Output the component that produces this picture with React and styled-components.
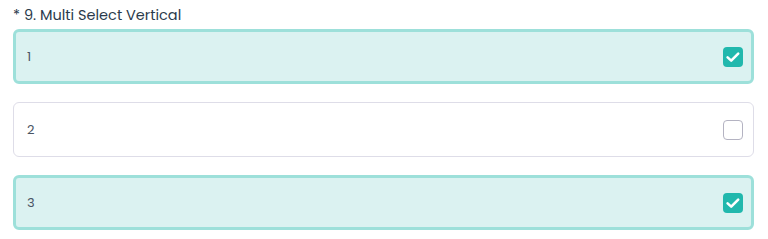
import React, { useState } from "react";
import styled, { createGlobalStyle } from "styled-components";

const Global = createGlobalStyle`
  html, body { margin: 0; padding: 0; background: #fff; }
  body { font-family: "Poppins", "Inter", "Noto Sans", sans-serif; }
`;

const Wrap = styled.div`
  padding: 5px 0 0 13px;
  width: 741px;
`;

const Title = styled.div`
  font-size: 14.5px;
  font-weight: 400;
  color: #2a3a4b;
  line-height: 20px;
  height: 24px;
`;

const List = styled.div`
  display: flex;
  flex-direction: column;
  gap: 18px;
`;

const Option = styled.label`
  box-sizing: border-box;
  height: 55px;
  display: flex;
  align-items: center;
  justify-content: space-between;
  border-radius: 6px;
  cursor: pointer;
  border: ${(p) => (p.$checked ? "3px solid #9de0da" : "1px solid #dedde8")};
  background: ${(p) => (p.$checked ? "#dbf2f1" : "#ffffff")};
  padding: ${(p) => (p.$checked ? "0 8px 0 11px" : "0 10px 0 13px")};
`;

const Label = styled.span`
  font-size: 13px;
  color: #4a5564;
`;

const Box = styled.span`
  width: 20px;
  height: 20px;
  box-sizing: border-box;
  border-radius: 4px;
  display: flex;
  align-items: center;
  justify-content: center;
  background: ${(p) => (p.$checked ? "#21b8ad" : "#fff")};
  border: ${(p) => (p.$checked ? "none" : "1.5px solid #b4b3c2")};
`;

const options = [
  { id: 1, checked: true },
  { id: 2, checked: false },
  { id: 3, checked: true },
];

export default function App() {
  const [state, setState] = useState(options);
  return (
    <>
      <Global />
      <Wrap>
        <Title>* 9. Multi Select Vertical</Title>
        <List>
          {state.map((o) => (
            <Option
              key={o.id}
              $checked={o.checked}
              onClick={() =>
                setState((s) => s.map((x) => (x.id === o.id ? { ...x, checked: !x.checked } : x)))
              }
            >
              <Label>{o.id}</Label>
              <Box $checked={o.checked}>
                {o.checked && (
                  <svg width="20" height="20" viewBox="0 0 20 20">
                    <path d="M4.6 10.4 L8.2 13.6 L15.2 6.6" fill="none" stroke="#fff" strokeWidth="2.6" strokeLinecap="round" strokeLinejoin="round" />
                  </svg>
                )}
              </Box>
            </Option>
          ))}
        </List>
      </Wrap>
    </>
  );
}
